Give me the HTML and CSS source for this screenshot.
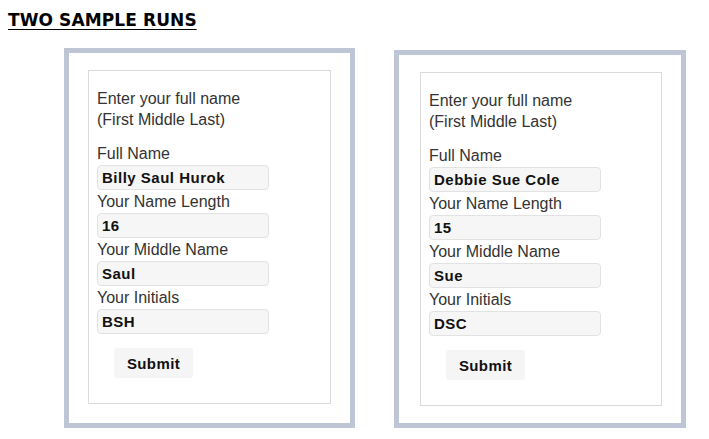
FILE: index.html
```html
<!DOCTYPE html>
<html>
<head>
<meta charset="utf-8" />
<title>Two Sample Runs</title>
<link rel="stylesheet" href="styles.css">
</head>
<body>
<!-- ********************* Title *********************** -->
<h1 class="title">TWO SAMPLE RUNS</h1>

<div class="runs">

 <!-- run 1 -->
 <div class="frame">
  <form class="panel">
   <p class="intro">Enter your full name<br>(First Middle Last)</p>
   <label class="fieldLabel">Full Name</label>
   <input type="text" class="field" value="Billy Saul Hurok" readonly>
   <label class="fieldLabel">Your Name Length</label>
   <input type="text" class="field" value="16" readonly>
   <label class="fieldLabel">Your Middle Name</label>
   <input type="text" class="field" value="Saul" readonly>
   <label class="fieldLabel">Your Initials</label>
   <input type="text" class="field" value="BSH" readonly>
   <input type="button" class="submitButton" value="Submit">
  </form>
 </div>

 <!-- run 2 -->
 <div class="frame frameLower">
  <form class="panel">
   <p class="intro">Enter your full name<br>(First Middle Last)</p>
   <label class="fieldLabel">Full Name</label>
   <input type="text" class="field" value="Debbie Sue Cole" readonly>
   <label class="fieldLabel">Your Name Length</label>
   <input type="text" class="field" value="15" readonly>
   <label class="fieldLabel">Your Middle Name</label>
   <input type="text" class="field" value="Sue" readonly>
   <label class="fieldLabel">Your Initials</label>
   <input type="text" class="field" value="DSC" readonly>
   <input type="button" class="submitButton" value="Submit">
  </form>
 </div>

</div>
</body>
</html>
```

FILE: styles.css
```css
body {
margin: 8px; background-color: #fff;
font-family: "Liberation Sans", Arial, sans-serif; color: #333;
}
.title {
margin: 0; height: 24px; line-height: 24px;
font-family: "Comic Sans MS", "DejaVu Sans", sans-serif; font-size: 17px; font-weight: bold;
letter-spacing: 0.1px;
color: #000; text-decoration: underline; text-underline-offset: 3px;
}
.runs {
display: flex; gap: 39px;
margin: 16px 0 0 56px;
}
.frame {
width: 243px;
border: 5px solid #bec5d4;
padding: 17px 19px;
}
.frameLower { margin-top: 2px; width: 242px; padding-left: 21px; }
.panel {
display: flex; flex-direction: column; align-items: flex-start;
border: 1px solid #dadada;
padding: 17px 8px 25px 8px;
}
.intro {
margin: 0 0 13px 0;
font-size: 16px; line-height: 21px;
}
.fieldLabel {
display: block; height: 22px;
font-size: 16px; line-height: 22px;
}
.field {
box-sizing: border-box; width: 172px; height: 25px;
margin: 0 0 1px 0; padding: 0 4px;
border: 1px solid #e2e2e2; border-radius: 4px; background-color: #f6f6f6;
font-family: "Liberation Sans", Arial, sans-serif; font-size: 15px; font-weight: bold;
letter-spacing: 0.5px; color: #111;
outline: none;
}
.submitButton {
width: 79px; height: 30px;
margin: 13px 0 0 17px;
border: none; border-radius: 3px; background-color: #f5f5f5;
font-family: "Liberation Sans", Arial, sans-serif; font-size: 15px; font-weight: bold;
letter-spacing: 0.4px; color: #111;
-webkit-appearance: none;
}
```
